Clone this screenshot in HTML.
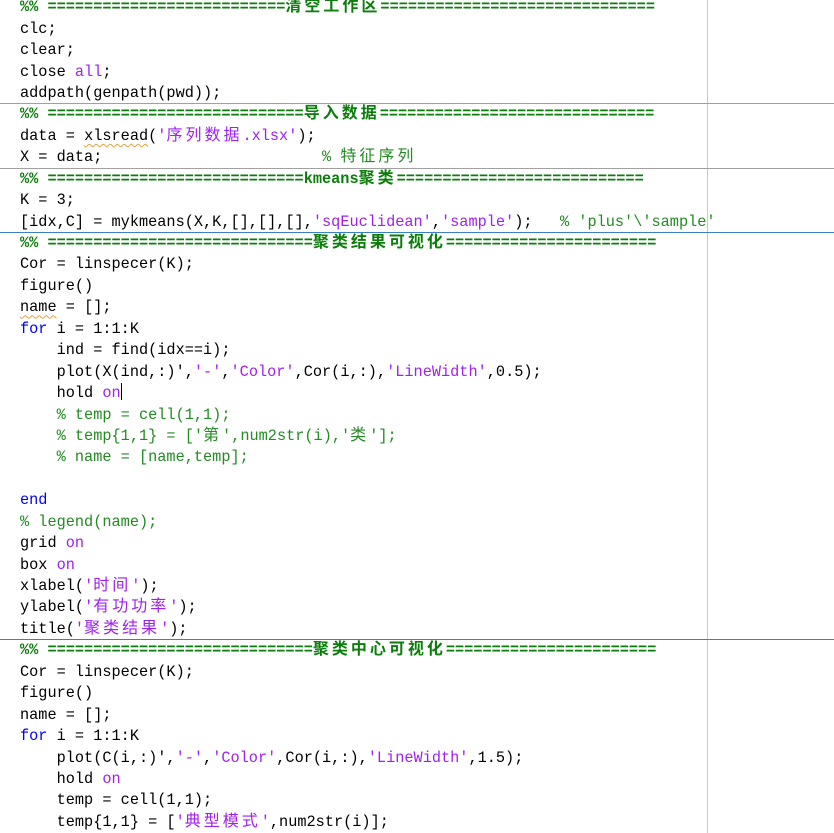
<!DOCTYPE html>
<html><head><meta charset="utf-8"><style>
html,body{margin:0;padding:0;background:#fff;width:834px;height:833px;overflow:hidden;position:relative}
#code{position:absolute;left:20px;top:-2.8px;font-family:"Liberation Mono","Noto Sans CJK SC",monospace;font-size:15.25px;line-height:21.45px;color:#000}
.l{height:21.45px;white-space:pre}
.h{color:#0a7d0a;font-weight:bold}
.s{color:#a020f0}
.k{color:#0000ff}
.c{color:#228b22}
.z{letter-spacing:3px;font-size:16px;line-height:1;font-weight:normal}
.h .z{font-weight:bold}
.w{text-decoration:underline wavy #e0a040;text-decoration-thickness:1px;text-underline-offset:3px}
.sep{position:absolute;left:0;width:834px;height:1px}
.g{background:#a0a0a0}
.b{background:#3b7fc4}
.vl{position:absolute;left:707px;top:0;width:1px;height:833px;background:#c8c8c8}
.cur{display:inline-block;width:1px;height:17px;background:#000;vertical-align:-3px}
</style></head><body>
<div class="vl"></div>
<div class="sep g" style="top:103px"></div>
<div class="sep g" style="top:168px"></div>
<div class="sep b" style="top:232px"></div>
<div class="sep b" style="top:639px"></div>
<div id="code"><div class="l h">%% ==========================<span class="z">清空工作区</span>==============================</div><div class="l">clc;</div><div class="l">clear;</div><div class="l">close <span class="s">all</span>;</div><div class="l">addpath(genpath(pwd));</div><div class="l h">%% ============================<span class="z">导入数据</span>==============================</div><div class="l">data = <span class="w">xlsread</span>(<span class="s">'<span class="z">序列数据</span>.xlsx'</span>);</div><div class="l">X = data;                        <span class="c">% <span class="z">特征序列</span></span></div><div class="l h">%% ============================kmeans<span class="z">聚类</span>===========================</div><div class="l">K = 3;</div><div class="l">[idx,C] = mykmeans(X,K,[],[],[],<span class="s">'sqEuclidean'</span>,<span class="s">'sample'</span>);   <span class="c">% 'plus'\'sample'</span></div><div class="l h">%% =============================<span class="z">聚类结果可视化</span>=======================</div><div class="l">Cor = linspecer(K);</div><div class="l">figure()</div><div class="l"><span class="w">name</span> = [];</div><div class="l"><span class="k">for</span> i = 1:1:K</div><div class="l">    ind = find(idx==i);</div><div class="l">    plot(X(ind,:)',<span class="s">'-'</span>,<span class="s">'Color'</span>,Cor(i,:),<span class="s">'LineWidth'</span>,0.5);</div><div class="l">    hold <span class="s">on</span><span class="cur"></span></div><div class="l c">    % temp = cell(1,1);</div><div class="l c">    % temp{1,1} = ['<span class="z">第</span>',num2str(i),'<span class="z">类</span>'];</div><div class="l c">    % name = [name,temp];</div><div class="l"> </div><div class="l"><span class="k">end</span></div><div class="l c">% legend(name);</div><div class="l">grid <span class="s">on</span></div><div class="l">box <span class="s">on</span></div><div class="l">xlabel(<span class="s">'<span class="z">时间</span>'</span>);</div><div class="l">ylabel(<span class="s">'<span class="z">有功功率</span>'</span>);</div><div class="l">title(<span class="s">'<span class="z">聚类结果</span>'</span>);</div><div class="l h">%% =============================<span class="z">聚类中心可视化</span>=======================</div><div class="l">Cor = linspecer(K);</div><div class="l">figure()</div><div class="l">name = [];</div><div class="l"><span class="k">for</span> i = 1:1:K</div><div class="l">    plot(C(i,:)',<span class="s">'-'</span>,<span class="s">'Color'</span>,Cor(i,:),<span class="s">'LineWidth'</span>,1.5);</div><div class="l">    hold <span class="s">on</span></div><div class="l">    temp = cell(1,1);</div><div class="l">    temp{1,1} = [<span class="s">'<span class="z">典型模式</span>'</span>,num2str(i)];</div></div>
</body></html>
